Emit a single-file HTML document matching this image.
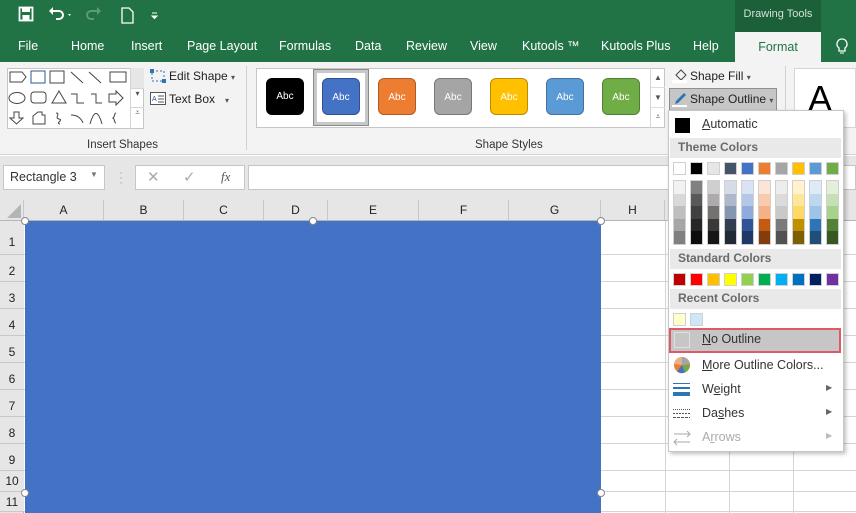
<!DOCTYPE html>
<html><head><meta charset="utf-8"><style>
*{margin:0;padding:0;box-sizing:border-box}
body{width:856px;height:513px;overflow:hidden;position:relative;font-family:"Segoe UI","Liberation Sans",sans-serif;font-size:12px;color:#222;background:#fff}
.a{position:absolute}
.tab{position:absolute;top:39px;color:#fff;font-size:12.5px}
.sw{position:absolute;width:13px;height:13px;border:1px solid #d0d0d0}
.hd{position:absolute;left:670px;width:171px;height:20px;background:#e9e9e9;color:#6a6a6a;font-weight:bold;font-size:12px;padding:2px 0 0 8px}
.mi{position:absolute;left:702px;font-size:12.5px;color:#333}
.abc{position:absolute;top:78px;width:38px;height:37px;border-radius:6px;color:#fff;font-size:10px;text-align:center;line-height:37px}
.ch{position:absolute;top:200px;height:20px;text-align:center;font-size:12px;line-height:20px;border-right:1px solid #c8c8c8;color:#222}
.rh{position:absolute;left:0;width:24px;text-align:center;font-size:12px;border-bottom:1px solid #c8c8c8;background:#e6e6e6}
</style></head><body>
<!-- title bar -->
<div class="a" style="left:0;top:0;width:856px;height:62px;background:#217346"></div>
<div class="a" style="left:735px;top:0;width:86px;height:32px;background:#1c6039;color:#cfe3d7;font-size:11px;text-align:center;line-height:29px">Drawing Tools</div>
<svg class="a" style="left:18px;top:6px" width="150" height="18" viewBox="0 0 150 18">
<rect x="1.5" y="1.5" width="13" height="13" fill="none" stroke="#fff" stroke-width="1.8"/><rect x="4" y="2" width="8" height="4" fill="#fff"/><rect x="4.5" y="9" width="7" height="5" fill="#fff"/>
<path d="M34 5 h7 a4 4 0 0 1 0 8 h-3" fill="none" stroke="#fff" stroke-width="2"/><path d="M31 5 l4 -4 v8z" fill="#fff"/>
<path d="M50 8 l3 0 l-1.5 2z" fill="#fff"/>
<path d="M80 5 h-7 a4 4 0 0 0 0 8 h3" fill="none" stroke="#5c9b78" stroke-width="2"/><path d="M83 5 l-4 -4 v8z" fill="#5c9b78"/>
<path d="M104 2 h7 l4 4 v11 h-11z" fill="none" stroke="#fff" stroke-width="1.3"/>
<path d="M134 7 h5 M134 10 l2.5 2.5 l2.5 -2.5z" stroke="#fff" fill="#fff"/>
</svg>
<div class="tab" style="left:18px">File</div>
<div class="tab" style="left:71px">Home</div>
<div class="tab" style="left:131px">Insert</div>
<div class="tab" style="left:187px">Page Layout</div>
<div class="tab" style="left:279px">Formulas</div>
<div class="tab" style="left:355px">Data</div>
<div class="tab" style="left:406px">Review</div>
<div class="tab" style="left:470px">View</div>
<div class="tab" style="left:522px">Kutools ™</div>
<div class="tab" style="left:601px">Kutools Plus</div>
<div class="tab" style="left:693px">Help</div>
<div class="a" style="left:735px;top:32px;width:86px;height:31px;background:#f3f3f3;color:#217346;font-size:12.5px;text-align:center;line-height:30px">Format</div>
<svg class="a" style="left:835px;top:37px" width="14" height="20"><path d="M7 2a5 5 0 0 0-3 9v3h6v-3a5 5 0 0 0-3-9z" fill="none" stroke="#fff" stroke-width="1.3"/><path d="M5 16h4" stroke="#fff"/></svg>
<!-- ribbon -->
<div class="a" style="left:0;top:62px;width:856px;height:93px;background:#f3f3f3;border-bottom:1px solid #d5d5d5"></div>
<div class="a" style="left:7px;top:68px;width:137px;height:61px;background:#fff;border:1px solid #c6c6c6"></div>
<div class="a" style="left:130px;top:68px;width:14px;height:61px;border-left:1px solid #d5d5d5"><div style="height:21px;background:#e6e6e6;border-bottom:1px solid #d5d5d5"></div><div style="height:19px;border-bottom:1px solid #d5d5d5;font-size:8px;text-align:center;color:#555">▾</div><div style="font-size:8px;text-align:center;color:#555">⩡</div></div>
<svg class="a" style="left:8px;top:69px" width="122" height="58" fill="none" stroke="#444" stroke-width="1">
<path d="M2 3h12l4 5-4 5H2z"/><rect x="23" y="2" width="14" height="12" stroke="#2b579a"/><rect x="42" y="2" width="14" height="12"/>
<path d="M63 3l12 11M81 3l12 11"/><rect x="102" y="3" width="16" height="10"/>
<ellipse cx="9" cy="29" rx="8" ry="5.5"/><rect x="23" y="23" width="15" height="11" rx="3"/><path d="M51 22l7 12h-14z"/><path d="M63 25h6v9h7"/><path d="M83 25h5v9h6"/><path d="M101 25h7v-3l7 7-7 7v-3h-7z"/>
<path d="M6 43h5v6h4l-6.5 6-6.5-6h4z"/><path d="M25 47l5-4h4v3h3v9h-12z"/><path d="M48 44c5 0 -2 5 3 6s-4 4 1 5"/><path d="M63 46c6 0 10 3 12 8"/><path d="M82 55c4-14 8-14 12 0"/><path d="M108 44c-2 0-1 4-3 5 2 1 1 5 3 5"/>
</svg>
<svg class="a" style="left:150px;top:69px" width="16" height="14"><rect x="2" y="2" width="12" height="10" fill="none" stroke="#2e75b6" stroke-dasharray="2 2"/><rect x="0" y="0" width="4" height="4" fill="#2e75b6"/><rect x="12" y="10" width="4" height="4" fill="#2e75b6"/></svg>
<div class="a" style="left:169px;top:69px;font-size:12px">Edit Shape <span style="font-size:8px;color:#555">▾</span></div>
<svg class="a" style="left:150px;top:92px" width="16" height="14"><rect x="0.5" y="0.5" width="15" height="12" fill="#fff" stroke="#555"/><text x="2" y="9" font-size="7" fill="#2b579a" font-family="Liberation Sans">A</text><path d="M8 4h6M8 7h6M8 10h6" stroke="#555"/></svg>
<div class="a" style="left:169px;top:92px;font-size:12px">Text Box &nbsp;&nbsp;<span style="font-size:8px;color:#555">▾</span></div>
<div class="a" style="left:87px;top:139px;font-size:11.5px;color:#333">Insert Shapes</div>
<div class="a" style="left:246px;top:66px;width:1px;height:84px;background:#d0d0d0"></div>
<div class="a" style="left:256px;top:68px;width:409px;height:60px;background:#fff;border:1px solid #c6c6c6"></div>
<div class="a" style="left:650px;top:68px;width:15px;height:60px;border-left:1px solid #d5d5d5;font-size:8px;color:#555;text-align:center"><div style="height:20px;line-height:20px;border-bottom:1px solid #ddd">▲</div><div style="height:20px;line-height:20px;border-bottom:1px solid #ddd">▼</div><div style="line-height:18px">⩡</div></div>
<div class="a" style="left:313px;top:69px;width:56px;height:57px;border:1px solid #8a8a8a;background:#fff;box-shadow:inset 0 0 0 3px #c8c8c8"></div>
<div class="abc" style="left:266px;background:#000">Abc</div>
<div class="abc" style="left:322px;background:#4472c4;border:1px solid #2f528f">Abc</div>
<div class="abc" style="left:378px;background:#ed7d31;border:1px solid #ae5a21">Abc</div>
<div class="abc" style="left:434px;background:#a5a5a5;border:1px solid #787878">Abc</div>
<div class="abc" style="left:490px;background:#ffc000;border:1px solid #bc8c00">Abc</div>
<div class="abc" style="left:546px;background:#5b9bd5;border:1px solid #41719c">Abc</div>
<div class="abc" style="left:602px;background:#70ad47;border:1px solid #507e32">Abc</div>
<div class="a" style="left:475px;top:139px;font-size:11.5px;color:#333">Shape Styles</div>
<svg class="a" style="left:672px;top:67px" width="16" height="17"><path d="M4 8l5-5 5 5-5 5z" fill="none" stroke="#444"/><rect x="0" y="13" width="15" height="3" fill="#fff"/></svg>
<div class="a" style="left:690px;top:69px;font-size:12px">Shape Fill <span style="font-size:8px;color:#555">▾</span></div>
<div class="a" style="left:669px;top:88px;width:108px;height:23px;background:#c6c6c6;border:1px solid #8f8f8f"></div>
<svg class="a" style="left:672px;top:90px" width="16" height="18"><path d="M4 11l8-8 2 2-8 8-3 1z" fill="#2e75b6"/><rect x="0" y="15" width="15" height="2" fill="#fff"/></svg>
<div class="a" style="left:690px;top:92px;font-size:12px">Shape Outline <span style="font-size:8px;color:#555">▾</span></div>
<div class="a" style="left:785px;top:66px;width:1px;height:60px;background:#d0d0d0"></div>
<div class="a" style="left:794px;top:68px;width:62px;height:60px;background:#fff;border:1px solid #d5d5d5;font-family:'Liberation Sans',sans-serif;font-size:36px;line-height:60px;padding-left:13px;color:#000">A</div>
<!-- formula bar -->
<div class="a" style="left:0;top:156px;width:856px;height:44px;background:#e6e6e6"></div>
<div class="a" style="left:3px;top:165px;width:102px;height:25px;background:#fff;border:1px solid #c6c6c6;font-size:12.5px;color:#333;padding:4px 0 0 6px">Rectangle 3<span class="a" style="left:86px;top:4px;font-size:8px;color:#777">▼</span></div>
<div class="a" style="left:119px;top:170px;color:#aaa;font-size:12px;line-height:5px">·<br>·<br>·</div>
<div class="a" style="left:135px;top:165px;width:110px;height:25px;background:#fff;border:1px solid #c6c6c6;color:#aaa;font-size:15px"><span class="a" style="left:11px;top:2px">✕</span><span class="a" style="left:47px;top:2px">✓</span><span class="a" style="left:85px;top:3px;font-family:'Liberation Serif',serif;font-style:italic;font-size:13px;color:#555">fx</span></div>
<div class="a" style="left:248px;top:165px;width:608px;height:25px;background:#fff;border:1px solid #c6c6c6"></div>
<!-- grid -->
<div class="a" style="left:0;top:200px;width:856px;height:21px;background:#e6e6e6;border-bottom:1px solid #b5b5b5"></div>
<svg class="a" style="left:6px;top:204px" width="16" height="15"><path d="M15 0v14H1z" fill="#b5b5b5"/></svg>
<div class="ch" style="left:0;width:24px"></div>
<div class="ch" style="left:24px;width:80px">A</div>
<div class="ch" style="left:104px;width:80px">B</div>
<div class="ch" style="left:184px;width:80px">C</div>
<div class="ch" style="left:264px;width:64px">D</div>
<div class="ch" style="left:328px;width:91px">E</div>
<div class="ch" style="left:419px;width:90px">F</div>
<div class="ch" style="left:509px;width:92px">G</div>
<div class="ch" style="left:601px;width:64px">H</div>
<div class="ch" style="left:665px;width:64px"></div>
<div class="ch" style="left:729px;width:64px"></div>
<div class="ch" style="left:793px;width:64px"></div>
<svg class="a" style="left:0;top:221px" width="856" height="292">
<g stroke="#d4d4d4" stroke-width="1">
<path d="M0 33.5H856M0 60.5H856M0 87.5H856M0 114.5H856M0 141.5H856M0 168.5H856M0 195.5H856M0 222.5H856M0 249.5H856M0 270.5H856M0 290.5H856"/>
<path d="M665.5 0V292M729.5 0V292M793.5 0V292"/>
</g></svg>
<div class="a" style="left:0;top:221px;width:24px;height:292px;background:#e6e6e6;border-right:1px solid #b5b5b5"></div>
<div class="rh" style="top:221px;height:34px;line-height:42px">1</div>
<div class="rh" style="top:255px;height:27px;line-height:32px">2</div>
<div class="rh" style="top:282px;height:27px;line-height:32px">3</div>
<div class="rh" style="top:309px;height:27px;line-height:32px">4</div>
<div class="rh" style="top:336px;height:27px;line-height:32px">5</div>
<div class="rh" style="top:363px;height:27px;line-height:32px">6</div>
<div class="rh" style="top:390px;height:27px;line-height:32px">7</div>
<div class="rh" style="top:417px;height:27px;line-height:32px">8</div>
<div class="rh" style="top:444px;height:27px;line-height:32px">9</div>
<div class="rh" style="top:471px;height:21px;line-height:20px">10</div>
<div class="rh" style="top:492px;height:20px;line-height:20px">11</div>
<div class="a" style="left:25px;top:221px;width:576px;height:292px;background:#4472c4"></div>
<svg class="a" style="left:20px;top:216px" width="590" height="297" fill="#fff" stroke="#888">
<circle cx="5" cy="5" r="3.5"/><circle cx="293" cy="5" r="3.5"/><circle cx="581" cy="5" r="3.5"/><circle cx="5" cy="277" r="3.5"/><circle cx="581" cy="277" r="3.5"/></svg>
<!-- menu -->
<div class="a" style="left:668px;top:110px;width:176px;height:342px;background:#fff;border:1px solid #c6c6c6;box-shadow:2px 2px 4px rgba(0,0,0,.25)"></div>
<div class="a" style="left:675px;top:118px;width:15px;height:15px;background:#000"></div>
<div class="mi" style="top:117px"><u>A</u>utomatic</div>
<div class="hd" style="top:138px">Theme Colors</div>
<div class="hd" style="top:249px">Standard Colors</div>
<div class="hd" style="top:289px">Recent Colors</div>
<div id="sw"></div>
<div class="a" style="left:669px;top:328px;width:172px;height:25px;background:#c6c6c6;border:2px solid #dd5b66"></div>
<div class="a" style="left:674px;top:332px;width:16px;height:16px;border:1px solid #e0e0e0"></div>
<div class="mi" style="top:332px"><u>N</u>o Outline</div>
<svg class="a" style="left:673px;top:356px" width="18" height="18"><circle cx="9" cy="9" r="8" fill="#ed7d31"/><path d="M9 9L9 1A8 8 0 0 1 17 8z" fill="#a5a5a5"/><path d="M9 9L17 9A8 8 0 0 1 12 16.5z" fill="#70ad47"/><path d="M9 9L12 16.5A8 8 0 0 1 4 15.5z" fill="#4472c4"/><path d="M9 9L1 8A8 8 0 0 1 9 1z" fill="#e8b08a"/></svg>
<div class="mi" style="top:358px"><u>M</u>ore Outline Colors...</div>
<svg class="a" style="left:673px;top:383px" width="18" height="14"><rect y="0" width="17" height="1" fill="#2e75b6"/><rect y="4" width="17" height="2" fill="#2e75b6"/><rect y="9" width="17" height="4" fill="#2e75b6"/></svg>
<div class="mi" style="top:382px">W<u>e</u>ight</div>
<div class="a" style="left:826px;top:383px;font-size:8px;color:#666">▶</div>
<svg class="a" style="left:673px;top:408px" width="18" height="12" stroke="#555"><path d="M0 1.5h17" stroke-dasharray="1 1"/><path d="M0 5.5h17" stroke-dasharray="2 1"/><path d="M0 9.5h17" stroke-dasharray="3 1"/></svg>
<div class="mi" style="top:406px">Da<u>s</u>hes</div>
<div class="a" style="left:826px;top:407px;font-size:8px;color:#666">▶</div>
<svg class="a" style="left:673px;top:430px" width="18" height="16" stroke="#aaa" fill="none"><path d="M1 4h16M14 1l3 3-3 3M1 12h16M4 9l-3 3 3 3"/></svg>
<div class="mi" style="top:430px;color:#aaa">A<u>r</u>rows</div>
<div class="a" style="left:826px;top:431px;font-size:8px;color:#bbb">▶</div>
<script>
var t=["#ffffff","#000000","#e7e6e6","#44546a","#4472c4","#ed7d31","#a5a5a5","#ffc000","#5b9bd5","#70ad47"];
var sh=[["#f2f2f2","#d9d9d9","#bfbfbf","#a6a6a6","#808080"],["#808080","#595959","#404040","#262626","#0d0d0d"],["#d0cece","#aeabab","#757171","#3b3838","#171616"],["#d6dce5","#adb9ca","#8497b0","#333f50","#222a35"],["#dae3f3","#b4c7e7","#8faadc","#2f5597","#203864"],["#fbe5d6","#f8cbad","#f4b183","#c55a11","#843c0c"],["#ededed","#dbdbdb","#c9c9c9","#7b7b7b","#525252"],["#fff2cc","#ffe699","#ffd966","#bf9000","#7f6000"],["#deebf7","#bdd7ee","#9dc3e6","#2e75b6","#1f4e79"],["#e2f0d9","#c5e0b4","#a9d18e","#548235","#385723"]];
var s=["#c00000","#ff0000","#ffc000","#ffff00","#92d050","#00b050","#00b0f0","#0070c0","#002060","#7030a0"];
var h="";
for(var i=0;i<10;i++){var x=673+i*17;
h+='<div class="sw" style="left:'+x+'px;top:162px;background:'+t[i]+'"></div>';
h+='<div class="a" style="left:'+x+'px;top:180px;width:13px;height:65px;border:1px solid #d0d0d0">';
for(var j=0;j<5;j++)h+='<div style="height:12.6px;background:'+sh[i][j]+'"></div>';
h+='</div>';
h+='<div class="sw" style="left:'+x+'px;top:273px;background:'+s[i]+'"></div>';}
h+='<div class="sw" style="left:673px;top:313px;background:#ffffcc"></div><div class="sw" style="left:690px;top:313px;background:#cce8f8"></div>';
document.getElementById("sw").outerHTML=h;
</script>
</body></html>
